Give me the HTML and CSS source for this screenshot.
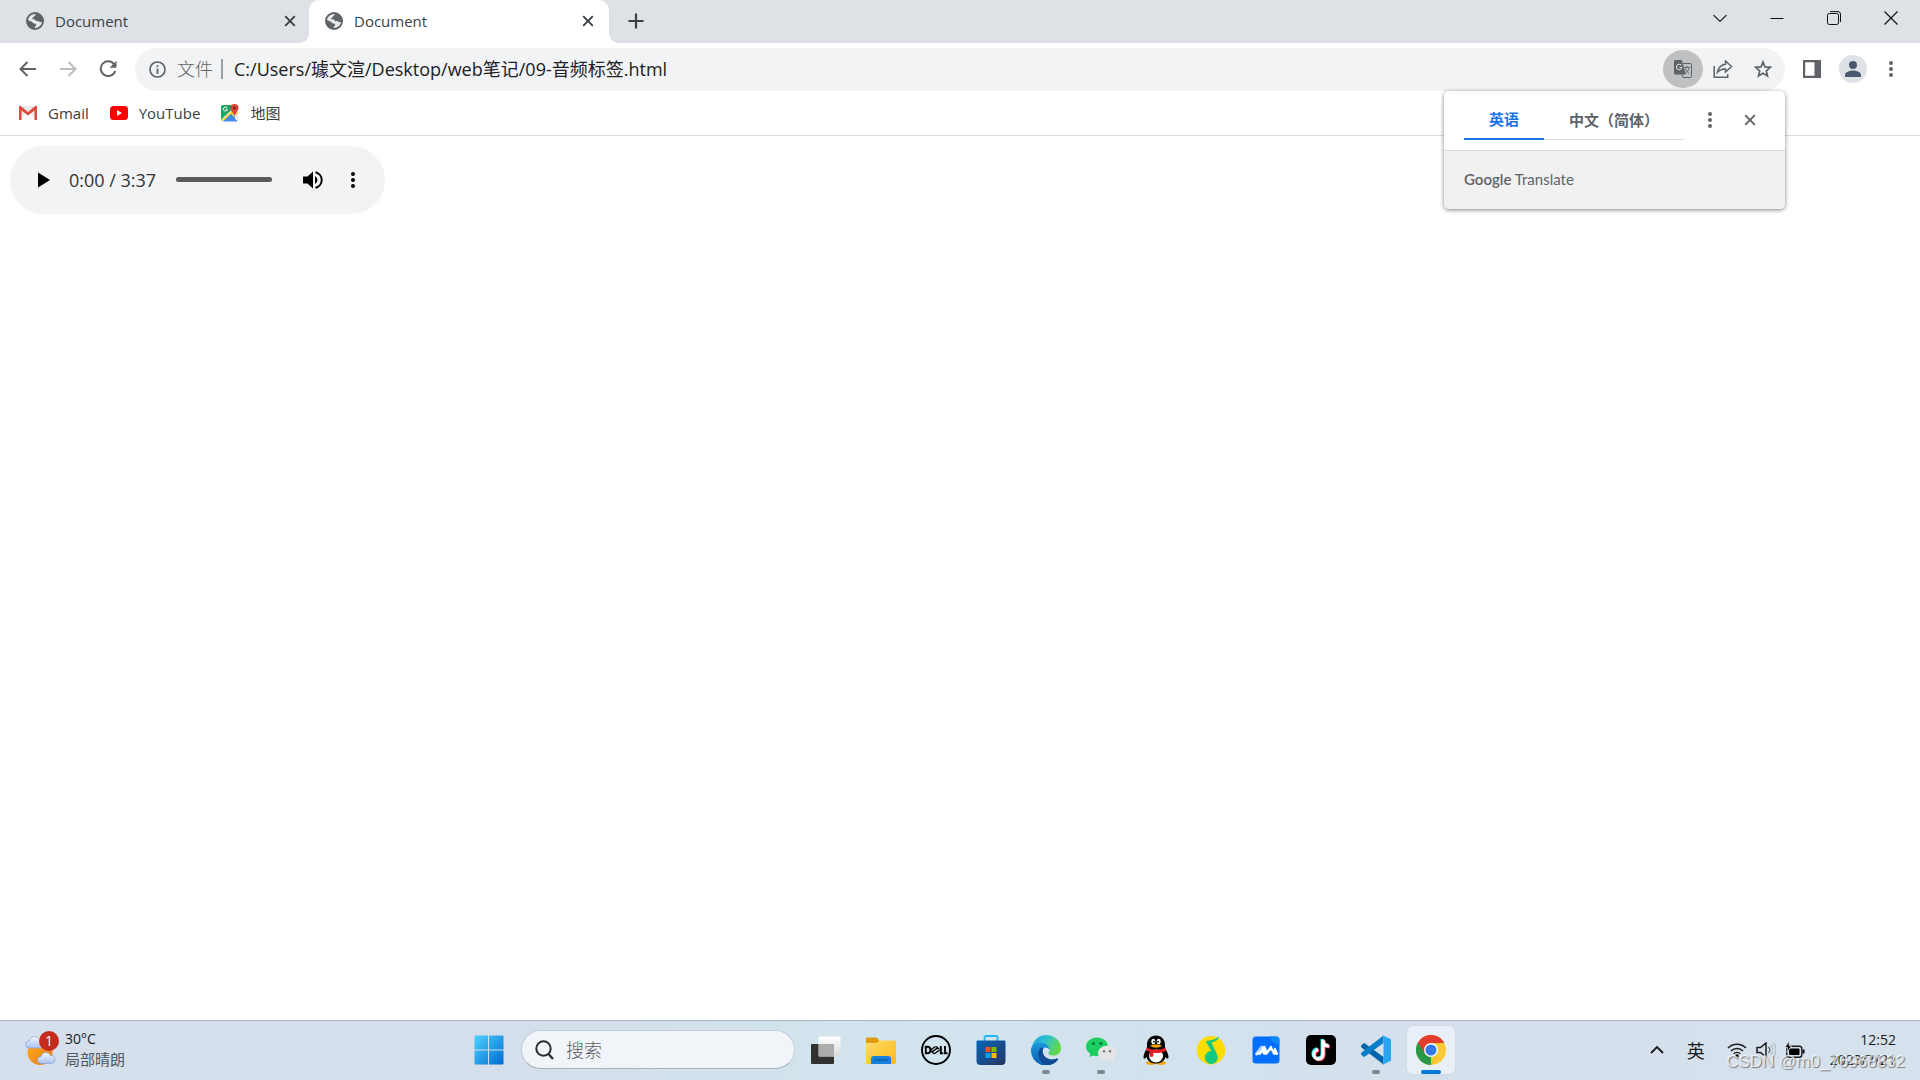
FILE: index.html
```html
<!DOCTYPE html>
<html lang="zh-CN">
<head>
  <meta charset="UTF-8" />
  <meta name="viewport" content="width=device-width, initial-scale=1.0"/>
  <title>Document</title>
  <link rel="stylesheet" href="styles.css">
</head>
<body>
  <!-- Iconos compartidos -->
  <svg class="defs" aria-hidden="true">
    <symbol id="globe" viewBox="0 0 18 18">
      <circle cx="9" cy="9" r="9" fill="#5f6368"/>
      <path d="M2 7.500C2.800 4.500 5.500 2.200 9.500 2c.3 1-.2 1.800-1.200 2.200-.8.300-.5 1.300-1.500 1.600-.9.300-.8 1.400.2 1.500 1.500.1 2.200.2 2.600 1.200.4.900 1.400.6 2.200.6 1.200 0 1.400 1 2.300 1h1.800c-.4 3.200-3 5.800-6.900 5.900-.6-.6-.3-1.400.4-1.800.9-.5 1-1.400.5-2-.6-.7-1.800-.3-2.500-.9C6.500 10.500 6 9.500 4.800 9.300 3.500 9.100 2.500 8.500 2 7.500z" fill="#e6e8eb"/>
    </symbol>
    <symbol id="cross" viewBox="0 0 12 12">
      <path d="M1.200 1.200l9.600 9.600M10.800 1.200l-9.600 9.600" fill="none" stroke="currentColor" stroke-width="1.900"/>
    </symbol>
    <symbol id="dots" viewBox="0 0 6 18">
      <circle cx="3" cy="3" r="2" fill="currentColor"/>
      <circle cx="3" cy="9" r="2" fill="currentColor"/>
      <circle cx="3" cy="15" r="2" fill="currentColor"/>
    </symbol>
  </svg>

  <!-- PESTAÑAS -->
  <header class="tab-strip">
    <div class="tab">
      <svg class="icon-18"><use href="#globe"/></svg>
      <span class="tab-title">Document</span>
      <button class="tab-close" aria-label="关闭"><svg class="icon-12"><use href="#cross"/></svg></button>
    </div>
    <div class="tab active">
      <svg class="icon-18"><use href="#globe"/></svg>
      <span class="tab-title">Document</span>
      <button class="tab-close" aria-label="关闭"><svg class="icon-12"><use href="#cross"/></svg></button>
    </div>
    <button class="new-tab" aria-label="打开新的标签页">
      <svg width="16" height="16" viewBox="0 0 16 16"><path d="M8 .5v15M.5 8h15" stroke="#3c4043" stroke-width="2.200"/></svg>
    </button>
    <div class="window-controls">
      <button aria-label="搜索标签页"><svg width="14" height="14" viewBox="0 0 14 14"><path d="M.5 4l6.500 6.500L13.500 4" fill="none" stroke="#222" stroke-width="1.100"/></svg></button>
      <button aria-label="最小化"><svg width="14" height="14" viewBox="0 0 14 14"><path d="M.5 7.500h13" stroke="#111"/></svg></button>
      <button aria-label="还原"><svg width="14" height="14" viewBox="0 0 14 14"><rect x=".5" y="2.500" width="11" height="11" rx="1.800" fill="none" stroke="#111"/><path d="M3 .6h8a2.500 2.500 0 0 1 2.500 2.500v8" fill="none" stroke="#111"/></svg></button>
      <button aria-label="关闭窗口"><svg width="14" height="14" viewBox="0 0 14 14"><path d="M.5.5l13 13M13.500.5l-13 13" stroke="#111" stroke-width="1.200"/></svg></button>
    </div>
  </header>

  <!-- BARRA DE DIRECCIONES -->
  <nav class="toolbar">
    <button class="nav-btn" aria-label="后退"><svg width="18" height="16" viewBox="0 0 18 16"><path d="M17 8H2M8.500 1L1.500 8l7 7" fill="none" stroke="#5f6368" stroke-width="2"/></svg></button>
    <button class="nav-btn" aria-label="前进"><svg width="18" height="16" viewBox="0 0 18 16"><path d="M1 8h15M9.500 1l7 7-7 7" fill="none" stroke="#babcbe" stroke-width="2"/></svg></button>
    <button class="nav-btn" aria-label="刷新"><svg width="18" height="18" viewBox="0 0 18 18"><path d="M15.500 4.800A7.400 7.400 0 1 0 16.200 11" fill="none" stroke="#5f6368" stroke-width="2"/><path d="M17.500.8v7h-7z" fill="#5f6368"/></svg></button>

    <div class="omnibox">
      <svg class="info" width="17" height="17" viewBox="0 0 17 17"><circle cx="8.500" cy="8.500" r="7.500" fill="none" stroke="#5f6368" stroke-width="1.700"/><path d="M8.500 7.500V13M8.500 4.200V6" stroke="#5f6368" stroke-width="1.800"/></svg>
      <label class="scheme" for="url">文件</label>
      <input class="url" id="url" type="text" value="C:/Users/璩文渲/Desktop/web笔记/09-音频标签.html">
      <button class="omni-btn pressed" aria-label="翻译此页">
        <svg width="18" height="18" viewBox="0 0 18 18"><path d="M9 3.500h7.500a1 1 0 0 1 1 1v12a1 1 0 0 1-1 1H9l-1-3" fill="none" stroke="#5f6368"/><path d="M1.200 0h6.600l4 14.500H1.200A1.200 1.200 0 0 1 0 13.300V1.200A1.200 1.200 0 0 1 1.200 0z" fill="#5f6368"/><path d="M7.300 5.400A2.700 2.700 0 1 0 7.800 7.500H5.200" fill="none" stroke="#d4d4d5" stroke-width="1.100"/><path d="M10 7.500h6M13 6v1.500M15 7.700c-.5 2.800-2 4.600-4 5.600M11.300 8.500c.7 2.300 2 3.800 4 5" fill="none" stroke="#5f6368" stroke-width=".9"/></svg>
      </button>
      <button class="omni-btn" aria-label="分享">
        <svg width="20" height="18" viewBox="0 0 20 18"><path d="M1.200 6v11.200h13.500V14" fill="none" stroke="#5f6368" stroke-width="1.500"/><path d="M12.500 1l6 5.500-6 5.500V9c-3.500-.1-6 1-8 3.300.8-4.300 3.500-7.500 8-8z" fill="none" stroke="#5f6368" stroke-width="1.500"/></svg>
      </button>
      <button class="omni-btn" aria-label="为此标签页添加书签">
        <svg width="18" height="18" viewBox="0 0 18 18"><path d="M9 2l2 4.900 5.300.4-4 3.500 1.200 5.200L9 13.200 4.500 16l1.200-5.200-4-3.500L7 6.900z" fill="none" stroke="#5f6368" stroke-width="1.700"/></svg>
      </button>

      <!-- Ventana de traducción -->
      <section class="translate-popup">
        <div class="translate-head">
          <div class="lang-tabs">
            <button class="lang selected">英语</button>
            <button class="lang">中文（简体）</button>
          </div>
          <button class="popup-btn" aria-label="翻译选项"><svg class="dots"><use href="#dots"/></svg></button>
          <button class="popup-btn" aria-label="关闭翻译"><svg class="icon-12"><use href="#cross"/></svg></button>
        </div>
        <div class="translate-brand"><strong>Google</strong> Translate</div>
      </section>
    </div>

    <div class="toolbar-actions">
      <button aria-label="侧边栏"><svg width="18" height="18" viewBox="0 0 18 18"><path d="M0 0h18v18H0zM2.200 2.200v13.600h9.300V2.200z" fill="#5f6368" fill-rule="evenodd"/></svg></button>
      <button aria-label="个人资料"><svg width="28" height="28" viewBox="0 0 28 28"><circle cx="14" cy="14" r="14" fill="#dee1e6"/><circle cx="14" cy="10" r="4" fill="#4c586e"/><path d="M6 22v-2c0-3 4.500-4.500 8-4.500s8 1.500 8 4.500v2z" fill="#4c586e"/></svg></button>
      <button class="menu-btn" aria-label="菜单"><svg class="dots"><use href="#dots"/></svg></button>
    </div>
  </nav>

  <!-- MARCADORES -->
  <nav class="bookmarks">
    <a href="#">
      <svg width="20" height="18" viewBox="0 0 20 18"><rect x="1" y="2" width="18" height="14" rx="1" fill="#e8e8e8"/><path d="M1 16l6-7 3 2 3-2 6 7z" fill="#f7f7f7"/><path d="M1 3v13h2.500V6.500L10 11.500l6.500-5V16H19V3c0-1-1.200-1.500-2-.8L10 8 3 2.200C2.200 1.500 1 2 1 3z" fill="#dd4b3e"/></svg>
      Gmail
    </a>
    <a href="#">
      <svg width="20" height="18" viewBox="0 0 20 18"><rect x="1" y="2" width="18" height="14" rx="3.500" fill="#f00"/><path d="M8 6v6l5-3z" fill="#fff"/></svg>
      YouTube
    </a>
    <a href="#">
      <svg class="maps" width="20" height="20" viewBox="0 0 20 20"><path d="M1 4a2 2 0 0 1 2-2h12v16H3a2 2 0 0 1-2-2z" fill="#1da462"/><path d="M1 17L14 5l4 5v6L11 11l-7 7H2.500z" fill="#fbd13c"/><path d="M3 18.500l7.500-7 7.500 7z" fill="#4688f1"/><path d="M12 12l6-1v6z" fill="#e4e5e7"/><path d="M2 16.500L13 6" stroke="#fff"/><path d="M7 4.800a2 2 0 1 0 .4 1.500H5.800" fill="none" stroke="#fff"/><path d="M14.500 1a4 4 0 0 1 4 4c0 3.500-3.500 5-4 9-.5-4-4-5.500-4-9a4 4 0 0 1 4-4z" fill="#dc4437"/><circle cx="14.500" cy="5" r="1.500" fill="#832018"/></svg>
      地图
    </a>
  </nav>

  <!-- PÁGINA -->
  <main class="page">
    <div class="player">
      <button class="play" aria-label="播放"><svg width="12" height="16" viewBox="0 0 12 16"><path d="M0 .5v15L12 8z"/></svg></button>
      <span class="time">0:00 / 3:37</span>
      <input class="seek" type="range" min="0" max="217" value="0" aria-label="音频时间轴">
      <button aria-label="静音"><svg width="20" height="18" viewBox="0 0 20 18"><path d="M0 5.500h4.500L10 .5v17l-5.500-5H0z"/><path d="M12 5a4.500 4.500 0 0 1 0 8z"/><path d="M12.500 1.200a8 8 0 0 1 0 15.600" fill="none" stroke="#000" stroke-width="2"/></svg></button>
      <button class="more" aria-label="更多媒体控件"><svg class="dots"><use href="#dots"/></svg></button>
    </div>
  </main>

  <!-- BARRA DE TAREAS -->
  <footer class="taskbar">
    <button class="weather">
      <svg width="34" height="36" viewBox="0 0 34 36">
        <defs>
          <linearGradient id="sun" x1="0" y1="0" x2="1" y2="1"><stop offset="0" stop-color="#fbb321"/><stop offset="1" stop-color="#ee7414"/></linearGradient>
          <linearGradient id="cloud" x1="0" y1="0" x2="0" y2="1"><stop offset="0" stop-color="#f2f7ff"/><stop offset="1" stop-color="#a9c1ef"/></linearGradient>
        </defs>
        <circle cx="15" cy="21.500" r="12.500" fill="url(#sun)"/>
        <path d="M4 17a3.500 3.500 0 0 1 0-7 5.500 5.500 0 0 1 10.500-1A4 4 0 0 1 16 17z" fill="url(#cloud)" stroke="#8aa4dc" stroke-width=".7"/>
        <path d="M16 32.500a3.500 3.500 0 0 1 0-7 5 5 0 0 1 9.500-1 4 4 0 0 1 1 8z" fill="url(#cloud)" stroke="#8aa4dc" stroke-width=".7"/>
        <circle cx="24" cy="10" r="10" fill="#c42b1c"/>
        <text class="badge-text" x="24" y="15">1</text>
      </svg>
      <span class="weather-text"><span>30°C</span><span class="muted">局部晴朗</span></span>
    </button>

    <div class="apps">
      <button class="app" aria-label="开始">
        <svg width="30" height="30" viewBox="0 0 30 30">
          <defs><linearGradient id="win" x1="0" y1="0" x2="1" y2="1"><stop offset="0" stop-color="#4fd3ff"/><stop offset="1" stop-color="#0069d0"/></linearGradient></defs>
          <path d="M1.500.5H14v14H.5v-13a1 1 0 0 1 1-1zM15 .5h13.500a1 1 0 0 1 1 1v13H15zM.5 15.500H14v14H1.500a1 1 0 0 1-1-1zM15 15.500h14.500v13a1 1 0 0 1-1 1H15z" fill="url(#win)"/>
        </svg>
      </button>
      <div class="search">
        <svg width="19" height="20" viewBox="0 0 19 20"><circle cx="8.500" cy="8.500" r="7.200" fill="none" stroke="#2b2d30" stroke-width="2"/><path d="M13.500 14l4.500 5" stroke="#2b2d30" stroke-width="2.400"/></svg>
        <input type="text" placeholder="搜索" aria-label="搜索">
      </div>
      <button class="app" aria-label="任务视图">
        <svg width="30" height="30" viewBox="0 0 30 30">
          <defs><linearGradient id="pane" x1="0" y1="0" x2="0" y2="1"><stop offset="0" stop-color="#fff"/><stop offset="1" stop-color="#d9d9d9"/></linearGradient></defs>
          <rect y="9" width="23" height="20" rx="1" fill="#31312f"/><rect x="7.500" y="1.500" width="22" height="20" rx="1" fill="url(#pane)"/><path d="M8 9h15v12.500H8z" fill="#adadad"/>
        </svg>
      </button>
      <button class="app" aria-label="文件资源管理器">
        <svg width="30" height="30" viewBox="0 0 30 30">
          <defs><linearGradient id="folder" x1="0" y1="0" x2="1" y2="1"><stop offset="0" stop-color="#ffdc60"/><stop offset="1" stop-color="#fbba20"/></linearGradient></defs>
          <path d="M0 3.500a1 1 0 0 1 1-1h9.500L13 5v3H0z" fill="#e09b00"/><path d="M0 8h10.500l3-2.500H29a1 1 0 0 1 1 1V28a1 1 0 0 1-1 1H1a1 1 0 0 1-1-1z" fill="url(#folder)"/><path d="M5 29v-5a3 3 0 0 1 3-3h14a3 3 0 0 1 3 3v5z" fill="#1683d9"/><path d="M8 25h14" stroke="#0a56a5" stroke-width="1.200"/>
        </svg>
      </button>
      <button class="app" aria-label="Dell">
        <svg width="30" height="30" viewBox="0 0 30 30"><circle cx="15" cy="15" r="14" fill="none" stroke="#000" stroke-width="1.900"/><path d="M4.800 11.700v6.600h1.500c2 0 3.200-1.300 3.200-3.300s-1.200-3.300-3.200-3.300zM19.800 11v7.300h2.500M24 11v7.300h2.500" fill="none" stroke="#000" stroke-width="1.900"/><path d="M9.500 15l5-3.500M10.500 17.200l6.500-4.600M13.500 18.700l5-3.700M9.500 15l3.500 3.700M15 11.500l3.200 2.500" stroke="#000" stroke-width="1.400"/></svg>
      </button>
      <button class="app" aria-label="Microsoft Store">
        <svg width="30" height="30" viewBox="0 0 30 30">
          <defs><linearGradient id="store" x1="0" y1="0" x2="1" y2="1"><stop offset="0" stop-color="#0667bd"/><stop offset="1" stop-color="#27355f"/></linearGradient></defs>
          <path d="M8.500 6.500v-4A1.500 1.500 0 0 1 10 1h10a1.500 1.500 0 0 1 1.500 1.500v4" fill="none" stroke="#25b7f5" stroke-width="1.800"/><path d="M.5 6.500a1 1 0 0 1 1-1h27a1 1 0 0 1 1 1V26a4 4 0 0 1-4 4h-21a4 4 0 0 1-4-4z" fill="url(#store)"/><path d="M9.500 12h5v5h-5z" fill="#f25022"/><path d="M15.500 12h5v5h-5z" fill="#7fba00"/><path d="M9.500 18h5v5h-5z" fill="#00a4ef"/><path d="M15.500 18h5v5h-5z" fill="#ffb900"/>
        </svg>
      </button>
      <button class="app running" aria-label="Microsoft Edge">
        <svg width="30" height="30" viewBox="0 0 30 30">
          <defs>
            <linearGradient id="edgeTop" x1="0" y1="0" x2="1" y2=".4"><stop offset="0" stop-color="#1f9fdc"/><stop offset=".5" stop-color="#2fc2d0"/><stop offset="1" stop-color="#62d948"/></linearGradient>
            <linearGradient id="edgeLow" x1="0" y1="0" x2="0" y2="1"><stop offset="0" stop-color="#1b98de"/><stop offset="1" stop-color="#0b5fb4"/></linearGradient>
          </defs>
          <path d="M1 11C3 4.500 8.500 0 15 0c8.500 0 15 6 15 13 0 5-3.500 7.500-7.500 7.500-3 0-5-1-5-2.300 0-.9 1.100-1.300 1.100-3.200C18.600 10 8 5.500 1 11z" fill="url(#edgeTop)"/>
          <path d="M0 15C0 10.500 4 7.500 9 7.500c5.500 0 9.500 3.500 9.500 7.500-1-1.700-2.500-2.500-4-2.500-3 0-3.500 3-2.500 6 1.500 4.500 7 7.500 13.500 5.200 1-.4 2 .3 1.200 1.300A15 15 0 0 1 0 15z" fill="url(#edgeLow)"/>
          <path d="M10 12.500c-4 3-4.500 12.500 4.500 17.400 5 .5 9.500-1.400 12.200-5 .8-1-.2-1.600-1.200-1.200C19 26 13.500 23 12 18.500c-.7-2-.6-4 .4-5.100z" fill="#124b93"/>
        </svg>
      </button>
      <button class="app running" aria-label="微信">
        <svg width="30" height="30" viewBox="0 0 30 30"><path d="M11 2.500c6 0 11 4 11 9.300S17 21 11 21c-1.300 0-2.400-.1-3.500-.5L3.500 22l.7-3.500C1.600 17 0 14.500 0 11.800 0 6.500 5 2.500 11 2.500z" fill="#1cce63"/><circle cx="7.500" cy="8.500" r="1.500" fill="#08773a"/><circle cx="14.800" cy="8.500" r="1.500" fill="#08773a"/><path d="M21 10.800c5 0 9 3.300 9 7.500 0 2.300-1.200 4.300-3 5.600l.5 2.600-3.300-1.300c-6.400 1.600-12.200-1.900-12.200-6.900 0-4.200 4-7.500 9-7.500z" fill="#e5e5e5"/><circle cx="18" cy="16.300" r="1.200" fill="#777"/><circle cx="24" cy="16.300" r="1.200" fill="#777"/></svg>
      </button>
      <button class="app" aria-label="QQ">
        <svg width="26" height="30" viewBox="0 0 26 30"><ellipse cx="8" cy="28" rx="5" ry="1.800" fill="#f5a400"/><ellipse cx="18" cy="28" rx="5" ry="1.800" fill="#f5a400"/><path d="M13 .5c5.500 0 9 4 9 9v4c2 2.500 3.500 6 3.500 8.500s-1.500 2-3 0c-1 4-4.500 6.500-9.500 6.500S4.500 26 3.500 22c-1.500 2-3 2.500-3 0S2 16 4 13.500v-4c0-5 3.500-9 9-9z" fill="#080808"/><ellipse cx="13" cy="21" rx="7" ry="6.500" fill="#fff"/><ellipse cx="10.300" cy="6.500" rx="2" ry="2.700" fill="#fff"/><ellipse cx="15.700" cy="6.500" rx="2" ry="2.700" fill="#fff"/><circle cx="10.900" cy="6.700" r=".9"/><circle cx="15.100" cy="6.700" r=".9"/><path d="M7 10.700c3-1.500 9-1.500 12 0-3 2.600-9 2.600-12 0z" fill="#f5a400"/><path d="M3.500 12.500c5.500 3 13.500 3 19 0l.5 3.300c-4 2.200-9 2.700-12.500 2l-.5 4H6.500l.3-5L3 15.500z" fill="#e61c24"/></svg>
      </button>
      <button class="app" aria-label="QQ音乐">
        <svg width="30" height="30" viewBox="0 0 30 30"><circle cx="15" cy="15.200" r="14.200" fill="#ffdc00"/><path d="M23 1c-.5 4.500-4 5.700-7.500 6.500l6 13a6.500 6.500 0 1 1-6.300-4.500L9.800 6C15 5.500 20 4.500 23 1z" fill="#13c981"/></svg>
      </button>
      <button class="app" aria-label="腾讯会议">
        <svg width="28" height="28" viewBox="0 0 28 28"><rect x=".5" y=".5" width="27" height="27" rx="3.500" fill="#006eff"/><path d="M18 .5h6a3.500 3.500 0 0 1 3.500 3.500v5c-4-1-9-4-9.500-8.500z" fill="#0d89fa"/><path d="M4.500 18l5.500-7.200c.8-1 1.600-1 2.300.3l2.700 5.400" fill="#b7d5ff"/><path d="M4.500 18L10 11" stroke="#b7d5ff" stroke-width="3" stroke-linecap="round"/><path d="M5 18l4-2.500 3.500-5 2.500 5.500 4-5.500 2.500 5.500 1.500-3.500 2.500 5.500h-3.500L19 12.500 14.500 18H12l-1.500-4L8 18z" fill="#fff" stroke="#fff" stroke-width="1.600" stroke-linejoin="round"/></svg>
      </button>
      <button class="app" aria-label="抖音">
        <svg width="30" height="30" viewBox="0 0 30 30">
          <rect width="30" height="30" rx="5" fill="#000"/>
          <g fill="none" stroke-width="3.300"><path d="M16.200 4v14.500a4.600 4.600 0 1 1-4.800-4.500M16.200 5c.3 3 2.500 5 6 5.400" stroke="#25f4ee"/><path d="M18 5.500V20a4.600 4.600 0 1 1-4.800-4.500M18 6.500c.3 3 2.500 5 6 5.400" stroke="#fe2c55"/><path d="M17 4.800v14.500a4.600 4.600 0 1 1-4.800-4.500M17 5.800c.3 3 2.500 5 6 5.400" stroke="#fff"/></g>
        </svg>
      </button>
      <button class="app running" aria-label="Visual Studio Code">
        <svg width="30" height="30" viewBox="0 0 30 30"><path d="M0 10.800l2.200-2.200c.5-.5 1.200-.5 1.800 0L22.500 22v7.500L.5 12.400c-.6-.5-.8-1-.5-1.600z" fill="#0065a9"/><path d="M0 19.200l2.200 2.200c.5.500 1.200.5 1.800 0L22.500 8V.5L.5 17.600c-.6.500-.8 1-.5 1.600z" fill="#087fc8"/><path d="M21.500.2l7.500 3.500c.6.300 1 .8 1 1.500v19.600c0 .7-.4 1.200-1 1.500l-7.500 3.500c.6-.5 1-1.200 1-2V2.200c0-.8-.4-1.500-1-2z" fill="#2aa5f2"/></svg>
      </button>
      <button class="app running current" aria-label="Google Chrome">
        <svg width="30" height="30" viewBox="0 0 30 30"><circle cx="15" cy="15" r="15" fill="#fcc934"/><path d="M15 15L2 7.500A15 15 0 0 0 15 30l6.500-11.200z" fill="#2a9846"/><path d="M15 8h13.300A15 15 0 0 0 2 7.500l6.900 11z" fill="#e33b2e"/><path d="M15 30l6.500-11.200L28.300 8H15z" fill="#fcc934"/><circle cx="15" cy="15" r="7" fill="#fff"/><circle cx="15" cy="15" r="5.600" fill="#3279ea"/></svg>
      </button>
    </div>

    <div class="tray">
      <button aria-label="显示隐藏的图标"><svg width="14" height="9" viewBox="0 0 14 9"><path d="M1 8l6-6 6 6" fill="none" stroke="#1b1b1b" stroke-width="1.900"/></svg></button>
      <button class="ime">英</button>
      <button class="status" aria-label="网络、音量和电池">
        <svg width="20" height="16" viewBox="0 0 20 16"><g fill="none" stroke="#1b1b1b" stroke-width="1.500"><path d="M1 6a12.500 12.500 0 0 1 18 0M4 9a8.500 8.500 0 0 1 12 0M6.700 11.800a4.800 4.800 0 0 1 6.600 0"/></g><circle cx="10" cy="14" r="1.700"/></svg>
        <svg width="20" height="16" viewBox="0 0 20 16"><path d="M1 5.500h3.500L10 1v14l-5.500-4.500H1z" fill="none" stroke="#1b1b1b" stroke-width="1.500"/><path d="M12.500 5a4.500 4.500 0 0 1 0 6" fill="none" stroke="#555" stroke-width="1.200"/><path d="M15 3a8 8 0 0 1 0 10M17.500 1a11 11 0 0 1 0 14" fill="none" stroke="#b2bac3" stroke-width="1.200"/></svg>
        <svg width="20" height="18" viewBox="0 0 20 18"><rect x="1.800" y="5.200" width="15" height="11" rx="2.500" fill="none" stroke="#1b1b1b" stroke-width="1.400"/><rect x="4" y="7.500" width="10.500" height="6.500" rx="1"/><path d="M17.500 8.500h2v4h-2z"/><path d="M4 0L0 6.500h2.500L2 11.500 6.500 5H4.200z" stroke="#d6e1ed" stroke-width=".8"/></svg>
      </button>
      <button class="clock"><span>12:52</span><span>2023/7/21</span></button>
    </div>
    <span class="watermark">CSDN @m0_76968832</span>
  </footer>
</body>
</html>
```
FILE: styles.css
```css
:root {
  --strip: #dee1e6;
  --field: #f1f3f4;
  --icon: #5f6368;
  --text: #3c4043;
  --blue: #1a73e8;
}

* {
  margin: 0;
  padding: 0;
  box-sizing: border-box;
}

body {
  font-family: 'Open Sans', 'Noto Sans CJK SC', sans-serif;
  font-size: 15px;
  color: var(--text);
  background-color: #fff;
  min-height: 100vh;
  display: flex;
  flex-direction: column;
}

button, input {
  font: inherit;
  color: inherit;
  background: none;
  border: none;
  outline: none;
}

button {
  display: flex;
  align-items: center;
  justify-content: center;
  cursor: pointer;
}

svg {
  display: block;
  flex-shrink: 0;
}

.defs {
  position: absolute;
  width: 0;
  height: 0;
}

.icon-18 {
  width: 18px;
  height: 18px;
}

.icon-12 {
  width: 12px;
  height: 12px;
}

.dots {
  width: 6px;
  height: 18px;
}

/* Pestañas */
.tab-strip {
  display: flex;
  height: 43px;
  background-color: var(--strip);
}

.tab {
  display: flex;
  align-items: center;
  gap: 11px;
  width: 300px;
  padding: 0 14px 1px 16px;
}

.tab:first-child {
  width: 309px;
  padding: 0 12px 1px 26px;
}

.tab.active {
  position: relative;
  background-color: #fff;
  border-radius: 10px 10px 0 0;
}

.tab.active::before,
.tab.active::after {
  content: "";
  position: absolute;
  bottom: 0;
  width: 10px;
  height: 10px;
}

.tab.active::before {
  right: 100%;
  background: radial-gradient(circle at 0 0, transparent 10px, #fff 10px);
}

.tab.active::after {
  left: 100%;
  background: radial-gradient(circle at 100% 0, transparent 10px, #fff 10px);
}

.tab-title {
  flex: 1;
}

.tab-close {
  width: 14px;
  height: 20px;
}

.new-tab {
  width: 54px;
  padding-bottom: 1px;
}

.window-controls {
  display: flex;
  margin-left: auto;
  padding-right: 1px;
  height: 36px;
}

.window-controls button {
  width: 57px;
}

/* Barra de direcciones */
.toolbar {
  display: flex;
  align-items: center;
  height: 48px;
  padding: 5px 11px 0 8px;
}

.nav-btn {
  width: 40px;
  height: 40px;
  padding-bottom: 2px;
}

.omnibox {
  position: relative;
  flex: 1;
  display: flex;
  align-items: center;
  height: 43px;
  margin-left: 7px;
  padding: 0 2px 1px 14px;
  background-color: var(--field);
  border-radius: 22px;
  font-size: 18px;
}

.scheme {
  margin-left: 11px;
  padding-right: 8px;
  border-right: 2px solid #9aa0a6;
  line-height: 20px;
  color: var(--icon);
  font-weight: 300;
}

.url {
  flex: 1;
  min-width: 0;
  margin-left: 11px;
  padding-bottom: 2px;
  color: #202124;
}

.omni-btn {
  width: 40px;
  height: 38px;
  border-radius: 50%;
}

.omni-btn.pressed {
  background-color: #bfc0c2;
}

.toolbar-actions {
  display: flex;
  align-items: center;
  margin-left: 6px;
}

.toolbar-actions button {
  width: 41px;
  height: 40px;
  padding-bottom: 2px;
}

.toolbar-actions .menu-btn {
  width: 36px;
  color: var(--icon);
}

/* Ventana de traducción */
.translate-popup {
  position: absolute;
  top: 100%;
  right: 0;
  z-index: 2;
  width: 341px;
  background-color: #fff;
  border-radius: 5px;
  box-shadow: 0 1px 4px rgba(0, 0, 0, 0.5);
  overflow: hidden;
  font-size: 15px;
}

.translate-head {
  display: flex;
  align-items: center;
  height: 60px;
  padding: 0 15px 2px 20px;
  border-bottom: 1px solid #d8d8d8;
  color: var(--icon);
}

.lang-tabs {
  display: flex;
  margin-right: 6px;
}

.lang {
  height: 40px;
  padding: 0 25px;
  border-bottom: 1px solid #dadce0;
  font-weight: 600;
}

.lang.selected {
  width: 80px;
  border-bottom: 2px solid var(--blue);
  color: var(--blue);
}

.popup-btn {
  width: 40px;
  height: 40px;
}

.translate-brand {
  padding: 0 20px 1px;
  background-color: #f1f1f1;
  font-family: Lato, sans-serif;
  line-height: 57px;
  color: var(--icon);
}

.translate-brand strong {
  font-weight: 600;
}

/* Marcadores */
.bookmarks {
  display: flex;
  align-items: center;
  gap: 20px;
  height: 45px;
  padding: 0 18px 1px;
  border-bottom: 1px solid #dadce0;
}

.bookmarks a {
  display: flex;
  align-items: center;
  gap: 10px;
  color: var(--text);
  text-decoration: none;
}

/* Página */
.page {
  flex: 1;
  padding: 10px;
}

.player {
  display: flex;
  align-items: center;
  width: 375px;
  height: 68px;
  padding: 0 12px 1px 14px;
  background-color: var(--field);
  border-radius: 34px;
}

.player button {
  width: 40px;
  height: 40px;
  color: #000;
}

.player .time {
  margin-left: 5px;
  font-size: 18px;
  color: #333;
  white-space: nowrap;
}

.seek {
  flex: 1;
  min-width: 0;
  height: 5px;
  margin: 0 21px 0 20px;
  appearance: none;
  background-color: #5a5a5a;
  border-radius: 3px;
}

.seek::-webkit-slider-thumb {
  appearance: none;
  width: 0;
  height: 0;
}

/* Barra de tareas */
.taskbar {
  position: relative;
  display: grid;
  grid-template-columns: 1fr auto 1fr;
  align-items: center;
  height: 60px;
  padding-bottom: 2px;
  background: linear-gradient(90deg, #d5e0ec 0%, #d4dfeb 28%, #d1e4ed 46%, #d3e2ed 64%, #d5dfec 76%, #d5e2ee 100%);
  border-top: 1px solid #a9b1bd;
  color: #1b1b1b;
}

.weather {
  justify-self: start;
  gap: 6px;
  padding: 0 0 2px 25px;
  font-size: 14px;
  line-height: 20px;
}

.weather-text {
  display: flex;
  flex-direction: column;
  align-items: flex-start;
}

.muted {
  font-size: 15px;
  color: #50565d;
}

.badge-text {
  font-size: 14px;
  fill: #fff;
  text-anchor: middle;
}

.apps {
  display: flex;
  align-items: center;
  gap: 7px;
}

.app {
  position: relative;
  width: 48px;
  height: 48px;
  border-radius: 5px;
}

.app.running::after {
  content: "";
  position: absolute;
  bottom: 0;
  left: 20px;
  width: 8px;
  height: 4px;
  border-radius: 2px;
  background-color: #7e868e;
}

.app.current {
  background-color: #e9eff7;
  box-shadow: 0 0 1px #aab4c0;
}

.app.current::after {
  left: 14px;
  width: 20px;
  background-color: #0078d4;
}

.search {
  display: flex;
  align-items: center;
  gap: 12px;
  width: 274px;
  height: 39px;
  margin-left: 1px;
  padding: 0 13px;
  background-color: #f1f5f9;
  border: 1px solid #c3d0dc;
  border-bottom-color: #a5b0bc;
  border-radius: 20px;
  font-size: 18px;
}

.search input {
  flex: 1;
  min-width: 0;
}

.search input::placeholder {
  color: #5b5f63;
  font-weight: 300;
  opacity: 1;
}

.tray {
  justify-self: end;
  display: flex;
  align-items: center;
  padding-right: 24px;
}

.ime {
  width: 34px;
  margin: 0 14px 0 15px;
  font-size: 18px;
}

.status {
  gap: 9px;
}

.clock {
  flex-direction: column;
  align-items: flex-end;
  margin-left: 25px;
  font-size: 14px;
  line-height: 20px;
}

/* Marca de agua sobre el reloj */
.watermark {
  position: absolute;
  right: 15px;
  bottom: 8px;
  font-family: 'Liberation Sans', sans-serif;
  font-size: 17px;
  line-height: 20px;
  color: rgba(255, 255, 255, 0.7);
  text-shadow: 1px 1px 1px #777;
}
```
